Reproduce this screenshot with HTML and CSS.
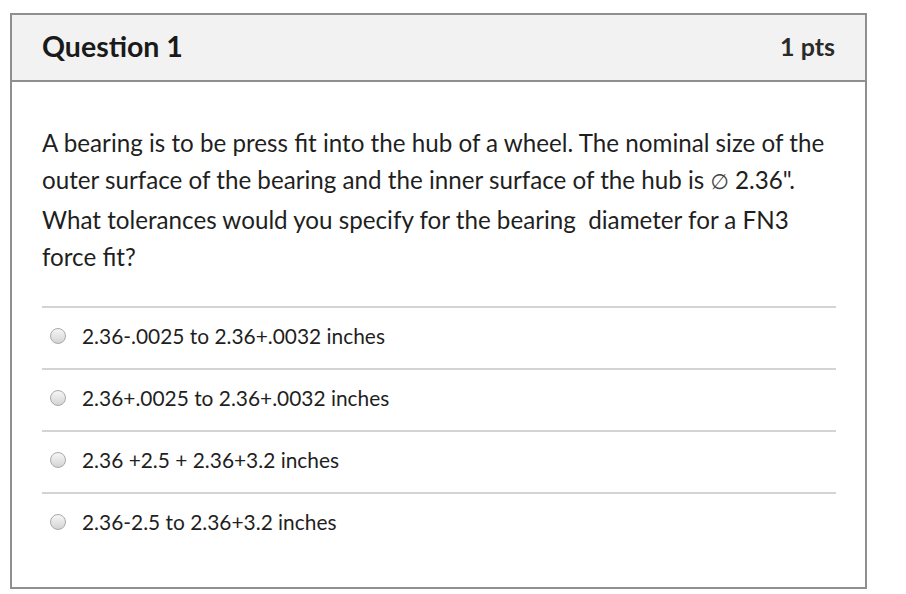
FILE: index.html
```html
<!DOCTYPE html>
<html>
<head>
<meta charset="utf-8">
<link rel="stylesheet" href="styles.css">
</head>
<body>
<div class="card">
  <div class="card-header">
    <h2 class="title">Question 1</h2>
    <span class="pts">1 pts</span>
  </div>
  <div class="card-body">
    <p class="question">A bearing is to be press fit into the hub of a wheel. The nominal size of the outer surface of the bearing and the inner surface of the hub is <span class="dia">∅</span> 2.36". What tolerances would you specify for the bearing &nbsp;diameter for a FN3 force fit?</p>
    <div class="answers">
      <label class="answer"><span class="radio"></span><span class="answer-text">2.36-.0025 to 2.36+.0032 inches</span></label>
      <label class="answer"><span class="radio"></span><span class="answer-text">2.36+.0025 to 2.36+.0032 inches</span></label>
      <label class="answer"><span class="radio"></span><span class="answer-text">2.36 +2.5 + 2.36+3.2 inches</span></label>
      <label class="answer"><span class="radio"></span><span class="answer-text">2.36-2.5 to 2.36+3.2 inches</span></label>
    </div>
  </div>
</div>
</body>
</html>
```
FILE: styles.css
```css
html, body {
  margin: 0;
  padding: 0;
  background: #ffffff;
}
body {
  font-family: Lato, "Open Sans", "Liberation Sans", sans-serif;
  color: #1f1f1f;
}
.card {
  box-sizing: border-box;
  width: 857px;
  margin: 13px 0 0 10px;
  border: 2px solid #8f8f8f;
}
.card-header {
  box-sizing: border-box;
  height: 67px;
  background: #f2f2f2;
  border-bottom: 2px solid #8f8f8f;
  display: flex;
  align-items: center;
  justify-content: space-between;
  padding: 0 30px 3px 30px;
}
.title {
  margin: 0;
  font-size: 28.5px;
  font-weight: 700;
  color: #1a1a1a;
}
.pts {
  font-size: 25px;
  font-weight: 700;
  color: #2a2a2a;
}
.card-body {
  padding: 42px 29px 33px 30px;
}
.question {
  margin: 0;
  font-size: 24.2px;
  line-height: 37px;
}
.dia {
  font-family: "DejaVu Sans", sans-serif;
  font-size: 21px;
  color: #444;
}
.answers {
  margin-top: 31px;
}
.answer {
  display: flex;
  align-items: center;
  height: 55px;
  padding-bottom: 5px;
  border-top: 2px solid #d4d4d4;
  padding-left: 8px;
}
.radio {
  box-sizing: border-box;
  width: 16px;
  height: 16px;
  border-radius: 50%;
  border: 1px solid #a9a9a9;
  background: linear-gradient(180deg, #f6f6f6 0%, #e2e2e2 60%, #d3d3d3 100%);
  margin-right: 16px;
  flex: none;
}
.answer-text {
  font-size: 20.9px;
  color: #1f1f1f;
}
```
